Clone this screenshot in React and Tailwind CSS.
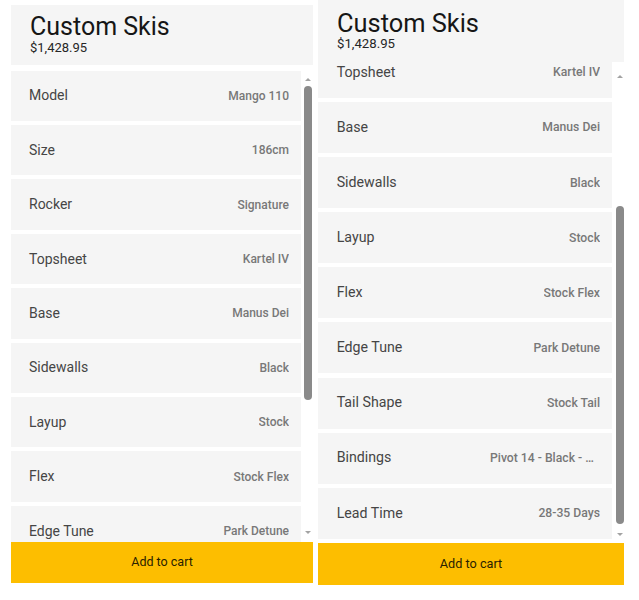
import React from "react";

const items = [
  ["Model", "Mango 110"],
  ["Size", "186cm"],
  ["Rocker", "Signature"],
  ["Topsheet", "Kartel IV"],
  ["Base", "Manus Dei"],
  ["Sidewalls", "Black"],
  ["Layup", "Stock"],
  ["Flex", "Stock Flex"],
  ["Edge Tune", "Park Detune"],
  ["Tail Shape", "Stock Tail"],
  ["Bindings", "Pivot 14 - Black - 100mm Brake"],
  ["Lead Time", "28-35 Days"],
];

const L = {
  panel: "w-[302px] mt-[5px]",
  header: "h-[60px] pl-[19px] pt-[8px]",
  title: "text-[25px] leading-[28px]",
  price: "text-[13px] leading-[14px]",
  list: "h-[472px]",
  rows: "w-[290px]",
  inner: "gap-[4px] mt-[0.7px]",
  row: "h-[50.4px] pl-[18px] pr-[12px]",
  label: "text-[14px]",
  value: "text-[12px] max-w-[150px]",
  bar: "w-[12px] pl-[3px] pt-[8px] pb-[8px]",
  thumbGap: "mt-[5px]",
  thumb: "w-[8px] h-[314px]",
  button: "h-[41px] text-[12.5px]",
};

const R = {
  panel: "w-[306px] ml-[5px]",
  header: "h-[62px] pl-[19px] pt-[8.5px]",
  title: "text-[25.4px] leading-[28px]",
  price: "text-[13.2px] leading-[14px] mt-[0.5px]",
  list: "h-[481px]",
  rows: "w-[294px]",
  inner: "gap-[4.1px] mt-[-180.3px]",
  row: "h-[51px] pl-[18.7px] pr-[12px]",
  label: "text-[14.2px]",
  value: "text-[12.2px] max-w-[110px]",
  bar: "w-[12px] pl-[4px] pt-[13px] pb-[7px]",
  thumbGap: "mt-[128px]",
  thumb: "w-[7.5px] h-[318px]",
  button: "h-[42px] text-[12.7px]",
};

function Up() {
  return (
    <div className="w-0 h-0 ml-[1px] border-l-[3px] border-r-[3px] border-b-[3.5px] border-l-transparent border-r-transparent border-b-[#a3a3a3]" />
  );
}
function Down() {
  return (
    <div className="w-0 h-0 ml-[1px] border-l-[3px] border-r-[3px] border-t-[3.5px] border-l-transparent border-r-transparent border-t-[#a3a3a3]" />
  );
}

function Panel({ c }) {
  return (
    <div className={`flex flex-col shrink-0 ${c.panel}`}>
      <div className={`bg-[#f5f5f5] shrink-0 ${c.header}`}>
        <div className={`text-[#161616] whitespace-nowrap ${c.title}`}>Custom Skis</div>
        <div className={`text-[#262626] ${c.price}`}>$1,428.95</div>
      </div>
      <div className={`flex shrink-0 ${c.list} ${c === L ? "mt-[5px]" : ""}`}>
        <div className={`overflow-hidden ${c.rows}`}>
          <div className={`flex flex-col ${c.inner}`}>
            {items.map(([label, value]) => (
              <div
                key={label}
                className={`flex items-center justify-between bg-[#f5f5f5] shrink-0 ${c.row}`}
              >
                <span className={`text-[#454545] whitespace-nowrap ${c.label}`}>{label}</span>
                <span className={`font-medium text-[#787878] truncate ${c.value}`}>{value}</span>
              </div>
            ))}
          </div>
        </div>
        <div className={`flex flex-col items-start ${c.bar}`}>
          <Up />
          <div className={`rounded-full bg-[#8a8a8a] ${c.thumbGap} ${c.thumb}`} />
          <div className="flex-1" />
          <Down />
        </div>
      </div>
      <button
        className={`shrink-0 bg-[#fdbe00] text-[#2a2200] flex items-center justify-center ${c.button}`}
      >
        Add to cart
      </button>
    </div>
  );
}

export default function App() {
  return (
    <div className="w-[639px] h-[600px] bg-white flex items-start pl-[11px] font-['Roboto',sans-serif]">
      <Panel c={L} />
      <Panel c={R} />
    </div>
  );
}
